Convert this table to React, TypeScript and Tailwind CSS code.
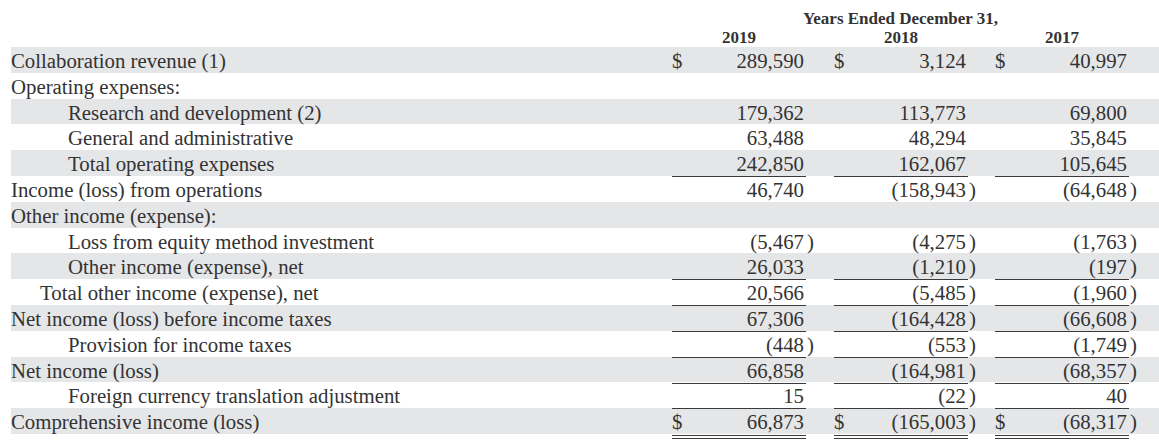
import React from 'react';

type Row = {
  label: string;
  indent?: 0 | 1 | 2;
  values?: string[];
  dollar?: boolean;
  rule?: 'single' | 'double';
};

const ROWS: Row[] = [
  { label: 'Collaboration revenue (1)', values: ['289,590', '3,124', '40,997'], dollar: true },
  { label: 'Operating expenses:' },
  { label: 'Research and development (2)', indent: 2, values: ['179,362', '113,773', '69,800'] },
  { label: 'General and administrative', indent: 2, values: ['63,488', '48,294', '35,845'] },
  { label: 'Total operating expenses', indent: 2, values: ['242,850', '162,067', '105,645'], rule: 'single' },
  { label: 'Income (loss) from operations', values: ['46,740', '(158,943)', '(64,648)'] },
  { label: 'Other income (expense):' },
  { label: 'Loss from equity method investment', indent: 2, values: ['(5,467)', '(4,275)', '(1,763)'] },
  { label: 'Other income (expense), net', indent: 2, values: ['26,033', '(1,210)', '(197)'], rule: 'single' },
  { label: 'Total other income (expense), net', indent: 1, values: ['20,566', '(5,485)', '(1,960)'], rule: 'single' },
  { label: 'Net income (loss) before income taxes', values: ['67,306', '(164,428)', '(66,608)'], rule: 'single' },
  { label: 'Provision for income taxes', indent: 2, values: ['(448)', '(553)', '(1,749)'], rule: 'single' },
  { label: 'Net income (loss)', values: ['66,858', '(164,981)', '(68,357)'], rule: 'single' },
  { label: 'Foreign currency translation adjustment', indent: 2, values: ['15', '(22)', '40'], rule: 'single' },
  { label: 'Comprehensive income (loss)', values: ['66,873', '(165,003)', '(68,317)'], dollar: true, rule: 'double' },
];

const GRID = 'grid grid-cols-[661px_134px_28px_134px_27px_134px_11px]';

function Amount({ value, dollar, rule }: { value?: string; dollar?: boolean; rule?: Row['rule'] }) {
  const neg = value?.startsWith('(');
  const num = neg ? value!.slice(0, -1) : value;
  return (
    <>
      <div
        className={`flex h-full items-start justify-between pr-[2px] ${
          rule === 'single' ? 'border-b border-[#3a3a3a]' : ''
        }`}
      >
        <span>{dollar ? '$' : ''}</span>
        <span>{num}</span>
      </div>
      <div className="pl-[1px]">{neg ? ')' : ''}</div>
    </>
  );
}

export default function App() {
  return (
    <div
      className="w-[1159px] h-[446px] bg-white text-[#333333]"
      style={{ fontFamily: '"Liberation Serif", "Times New Roman", serif' }}
    >
      {/* column headings */}
      <div className={`${GRID} pl-[11px] pt-[10px] h-[47px] text-[17px] font-bold leading-[18px]`}>
        <div />
        <div className="col-span-5 text-center">Years Ended December 31,</div>
        <div />
        <div />
        <div className="text-center">2019</div>
        <div />
        <div className="text-center">2018</div>
        <div />
        <div className="text-center">2017</div>
        <div />
      </div>

      <div className="pl-[11px] text-[20.8px]">
        {ROWS.map((row, i) => (
          <div
            key={row.label}
            className={`${GRID} h-[25.8px] leading-[24px] pt-[2px] ${i % 2 === 0 ? 'bg-[#e5e6e8]' : ''}`}
          >
            <div
              className={
                row.indent === 2 ? 'pl-[57px]' : row.indent === 1 ? 'pl-[29px]' : ''
              }
            >
              {row.label}
            </div>
            {[0, 1, 2].map((c) => (
              <Amount key={c} value={row.values?.[c]} dollar={row.dollar} rule={row.rule} />
            ))}
            <div />
          </div>
        ))}
        {/* double rule under the last total */}
        <div className={`${GRID} pt-[1px]`}>
          <div />
          <div className="h-[4px] border-y border-[#3a3a3a]" />
          <div />
          <div className="h-[4px] border-y border-[#3a3a3a]" />
          <div />
          <div className="h-[4px] border-y border-[#3a3a3a]" />
          <div />
        </div>
      </div>
    </div>
  );
}
